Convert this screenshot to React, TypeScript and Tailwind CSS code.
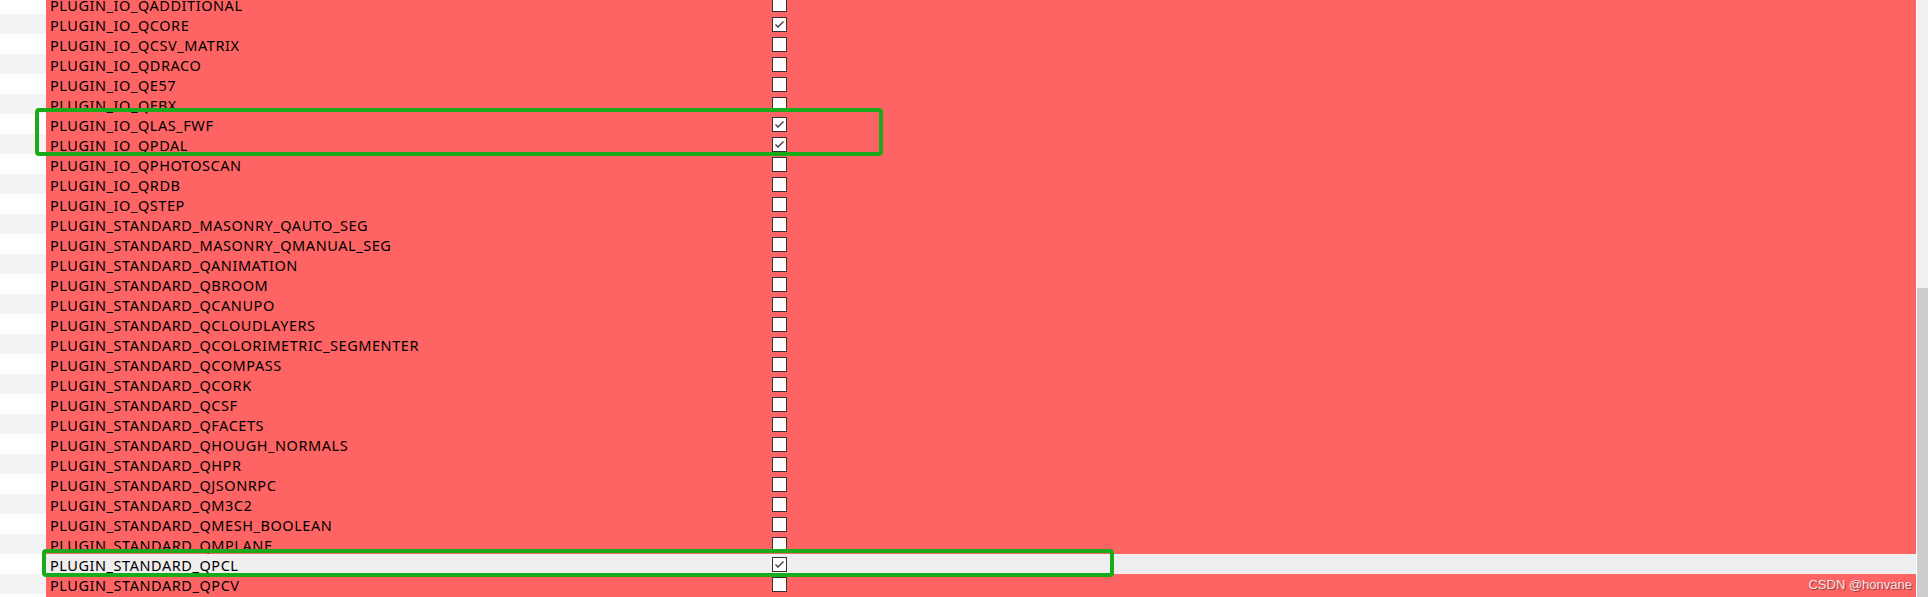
import React from 'react';

const plugins: { name: string; checked?: boolean }[] = [
  { name: 'PLUGIN_IO_QADDITIONAL' },
  { name: 'PLUGIN_IO_QCORE', checked: true },
  { name: 'PLUGIN_IO_QCSV_MATRIX' },
  { name: 'PLUGIN_IO_QDRACO' },
  { name: 'PLUGIN_IO_QE57' },
  { name: 'PLUGIN_IO_QFBX' },
  { name: 'PLUGIN_IO_QLAS_FWF', checked: true },
  { name: 'PLUGIN_IO_QPDAL', checked: true },
  { name: 'PLUGIN_IO_QPHOTOSCAN' },
  { name: 'PLUGIN_IO_QRDB' },
  { name: 'PLUGIN_IO_QSTEP' },
  { name: 'PLUGIN_STANDARD_MASONRY_QAUTO_SEG' },
  { name: 'PLUGIN_STANDARD_MASONRY_QMANUAL_SEG' },
  { name: 'PLUGIN_STANDARD_QANIMATION' },
  { name: 'PLUGIN_STANDARD_QBROOM' },
  { name: 'PLUGIN_STANDARD_QCANUPO' },
  { name: 'PLUGIN_STANDARD_QCLOUDLAYERS' },
  { name: 'PLUGIN_STANDARD_QCOLORIMETRIC_SEGMENTER' },
  { name: 'PLUGIN_STANDARD_QCOMPASS' },
  { name: 'PLUGIN_STANDARD_QCORK' },
  { name: 'PLUGIN_STANDARD_QCSF' },
  { name: 'PLUGIN_STANDARD_QFACETS' },
  { name: 'PLUGIN_STANDARD_QHOUGH_NORMALS' },
  { name: 'PLUGIN_STANDARD_QHPR' },
  { name: 'PLUGIN_STANDARD_QJSONRPC' },
  { name: 'PLUGIN_STANDARD_QM3C2' },
  { name: 'PLUGIN_STANDARD_QMESH_BOOLEAN' },
  { name: 'PLUGIN_STANDARD_QMPLANE' },
  { name: 'PLUGIN_STANDARD_QPCL', checked: true },
  { name: 'PLUGIN_STANDARD_QPCV' },
  { name: 'PLUGIN_STANDARD_QPOISSON_RECON' },
];

// row that is currently selected in the cache editor
const SELECTED = 'PLUGIN_STANDARD_QPCL';

const CheckBox: React.FC<{ checked?: boolean }> = ({ checked }) => (
  <div className="w-[15px] h-[15px] border border-[#333333] bg-white flex items-center justify-center">
    {checked && (
      <svg width="11" height="11" viewBox="0 0 11 11" fill="none">
        <path d="M1.5 5.5 L4 8 L9.5 2.5" stroke="#3a3a3a" strokeWidth="1.3" />
      </svg>
    )}
  </div>
);

const App: React.FC = () => {
  return (
    <div
      className="relative w-[1928px] h-[597px] overflow-hidden bg-white flex text-black"
      style={{ fontFamily: '"Noto Sans", "Liberation Sans", sans-serif' }}
    >
      {/* Table */}
      <div className="flex-1 flex flex-col mt-[-6px]">
        {plugins.map((p, i) => {
          const selected = p.name === SELECTED;
          return (
            <div key={p.name} className="flex h-[20px] shrink-0">
              <div className={`w-[46px] shrink-0 ${i % 2 === 1 ? 'bg-[#f3f3f3]' : 'bg-white'}`} />
              <div className={`flex-1 flex items-center ${selected ? 'bg-[#efefef]' : 'bg-[#ff6464]'}`}>
                <div className="w-[718px] shrink-0 pl-[4px] pt-[1px] text-[14.5px] tracking-[0.55px] leading-[20px] whitespace-nowrap">
                  {p.name}
                </div>
                <div className="pl-[8px]">
                  <CheckBox checked={p.checked} />
                </div>
              </div>
            </div>
          );
        })}
      </div>

      {/* Scrollbar */}
      <div className="w-[12px] shrink-0 border-l border-white bg-[#f0f0f0] flex flex-col">
        <div className="h-[288px]" />
        <div className="flex-1 bg-[#cdcdcd]" />
      </div>

      {/* Annotation boxes */}
      <div className="absolute left-[35px] top-[108px] w-[848px] h-[48px] border-4 border-[#1aab1a] rounded-[4px]" />
      <div className="absolute left-[42px] top-[549px] w-[1072px] h-[28px] border-4 border-[#1aab1a] rounded-[4px]" />

      {/* Watermark */}
      <div
        className="absolute right-[16px] bottom-[4px] text-[13px] leading-[16px] text-[#f2e4e4]"
        style={{ fontFamily: '"Liberation Sans", Arial, sans-serif', textShadow: '1px 1px 1px rgba(0,0,0,0.45)' }}
      >
        CSDN @honvane
      </div>
    </div>
  );
};

export default App;
